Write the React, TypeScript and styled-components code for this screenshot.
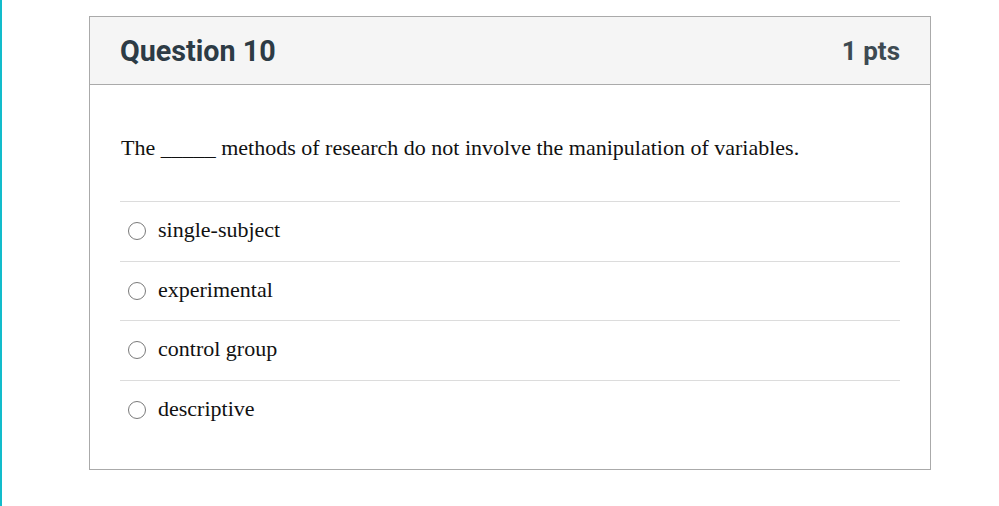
import React from "react";
import styled, { createGlobalStyle } from "styled-components";

const Global = createGlobalStyle`
  html, body { margin: 0; padding: 0; background: #fff; }
  body { font-family: "Liberation Serif", "Times New Roman", serif; }
`;

const Page = styled.div`
  display: flex;
  min-height: 506px;
  box-sizing: border-box;
`;

const Accent = styled.div`
  width: 2px;
  flex: 0 0 2px;
  background: #12bccb;
`;

const Main = styled.div`
  flex: 1;
  padding: 16px 0 0 87px;
`;

const Card = styled.div`
  width: 842px;
  box-sizing: border-box;
  border: 1px solid #aaaaaa;
`;

const Header = styled.div`
  height: 68px;
  box-sizing: border-box;
  background: #f5f5f5;
  border-bottom: 1px solid #aaaaaa;
  padding: 0 30px 0 30px;
  display: flex;
  align-items: center;
  justify-content: space-between;
  font-family: Roboto, "Liberation Sans", sans-serif;
  font-weight: 700;
  color: #2d3b45;
`;

const Title = styled.span`
  font-size: 28.7px;
`;

const Points = styled.span`
  font-size: 26px;
  color: #3d4a52;
`;

const Body = styled.div`
  padding: 46px 30px 30px 30px;
`;

const Prompt = styled.p`
  margin: 0 0 37px 1px;
  font-size: 22px;
  line-height: 33px;
  color: #111;
`;

const Answers = styled.div`
  display: flex;
  flex-direction: column;
`;

const Answer = styled.label`
  display: flex;
  align-items: center;
  gap: 12px;
  border-top: 1px solid #dcdcdc;
  padding: 13px 0 15.5px 8px;
  font-size: 22px;
  line-height: 30px;
  color: #111;
`;

const Radio = styled.span`
  width: 18px;
  height: 18px;
  box-sizing: border-box;
  border: 1.5px solid #7a7a7a;
  border-radius: 50%;
  flex: 0 0 18px;
  margin-top: 2px;
`;

const options = ["single-subject", "experimental", "control group", "descriptive"];

export default function App() {
  return (
    <>
      <Global />
      <Page>
        <Accent />
        <Main>
          <Card>
            <Header>
              <Title>Question 10</Title>
              <Points>1 pts</Points>
            </Header>
            <Body>
              <Prompt>The _____ methods of research do not involve the manipulation of variables.</Prompt>
              <Answers>
                {options.map((o) => (
                  <Answer key={o}>
                    <Radio />
                    {o}
                  </Answer>
                ))}
              </Answers>
            </Body>
          </Card>
        </Main>
      </Page>
    </>
  );
}
